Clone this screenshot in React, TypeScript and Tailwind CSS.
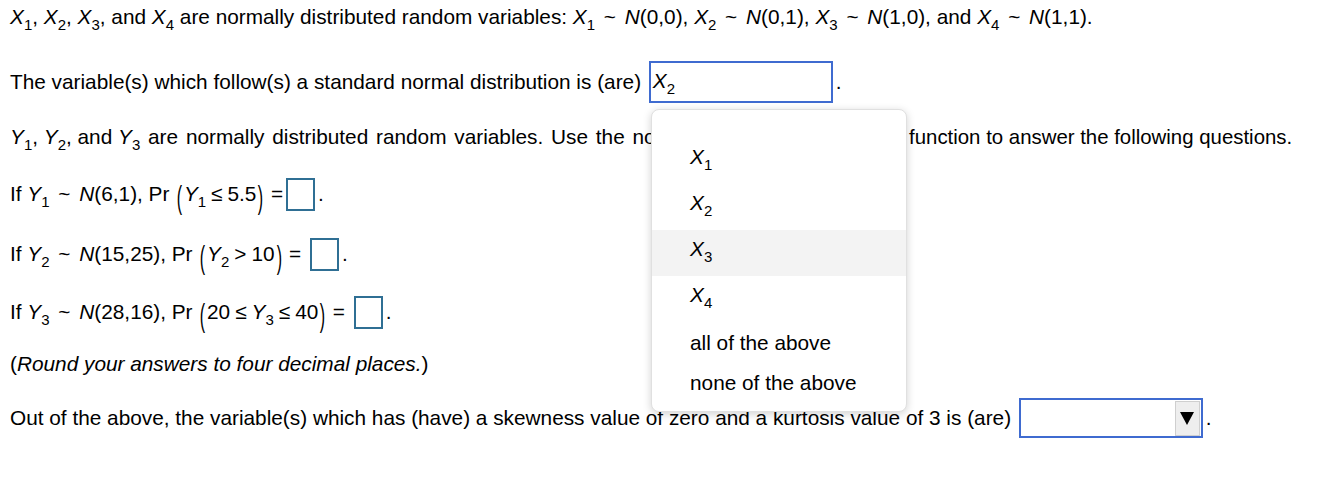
import type { ReactNode } from "react";

const font = "font-['Liberation_Sans',Arial,sans-serif]";

const V = ({ n, s }: { n: string; s: string }) => (
  <span className="whitespace-nowrap">
    <i>{n}</i>
    <span className="relative top-[6px] text-[15px] not-italic">{s}</span>
  </span>
);

const Tilde = () => <span className="mx-[3px]"> ~ </span>;

const Op = ({ c }: { c: string }) => <span className="mx-[5px]">{c}</span>;

const Paren = ({ c }: { c: string }) => (
  <span className="inline-block translate-y-[3px] scale-x-[0.8] scale-y-[1.6] px-[1px] text-[20px] leading-none">{c}</span>
);

const AnswerBox = () => <span className="mx-[3px] inline-block h-[33px] w-[29px] border-2 border-[#2f6f94] align-middle" />;

const Row = ({ className, children }: { className: string; children: ReactNode }) => (
  <div className={`flex items-center whitespace-pre ${className}`}>{children}</div>
);

const options = ["X1", "X2", "X3", "X4", "all", "none"];

export default function App() {
  return (
    <div className={`relative h-[478px] w-[1342px] overflow-hidden bg-white pl-[10px] text-[20.8px] text-black ${font}`}>
      <Row className="h-[34px]">
        <V n="X" s="1" />, <V n="X" s="2" />, <V n="X" s="3" />, and <V n="X" s="4" /> are normally distributed random variables:{" "}
        <V n="X" s="1" />
        <Tilde />
        <i>N</i>(0,0), <V n="X" s="2" />
        <Tilde />
        <i>N</i>(0,1), <V n="X" s="3" />
        <Tilde />
        <i>N</i>(1,0), and <V n="X" s="4" />
        <Tilde />
        <i>N</i>(1,1).
      </Row>

      <Row className="mt-[26px] h-[44px]">
        The variable(s) which follow(s) a standard normal distribution is (are){" "}
        <span className="ml-[2px] flex h-[42px] w-[184px] items-start border-2 border-[#3f6bd0] pl-[2px] pt-[2px]">
          <V n="X" s="2" />
        </span>
        <span className="ml-[3px]">.</span>
      </Row>

      <Row className="mt-[15px] h-[36px]">
        <V n="Y" s="1" />, <V n="Y" s="2" />, and <V n="Y" s="3" />
        <span className="[word-spacing:2px]"> are normally distributed random variables. Use the no</span>
        <span className="tracking-[-0.15px]">rmal cumulative distribution </span>
        <span className="text-[20.4px]">function to answer the following questions.</span>
      </Row>

      <Row className="mt-[21px] h-[36px]">
        If <V n="Y" s="1" />
        <Tilde />
        <i>N</i>(6,1), Pr <Paren c="(" />
        <V n="Y" s="1" />
        <Op c="≤" />
        5.5
        <Paren c=")" /> =<AnswerBox />.
      </Row>

      <Row className="mt-[24px] h-[36px]">
        If <V n="Y" s="2" />
        <Tilde />
        <i>N</i>(15,25), Pr <Paren c="(" />
        <V n="Y" s="2" />
        <Op c=">" />
        10
        <Paren c=")" /> = <AnswerBox />.
      </Row>

      <Row className="mt-[22px] h-[36px]">
        If <V n="Y" s="3" />
        <Tilde />
        <i>N</i>(28,16), Pr <Paren c="(" />
        20
        <Op c="≤" />
        <V n="Y" s="3" />
        <Op c="≤" />
        40
        <Paren c=")" /> = <AnswerBox />.
      </Row>

      <Row className="mt-[16px] h-[36px]">
        (<i>Round your answers to four decimal places.</i>)
      </Row>

      <Row className="mt-[16px] h-[40px]">
        Out of the above, the variable(s) which has (have) a skewness value of zero and a kurtosis value of 3 is (are){" "}
        <span className="ml-[2px] flex h-[40px] w-[184px] items-center justify-end border-2 border-[#3f6bd0] pr-[1px]">
          <span className="flex h-[35px] w-[25px] items-center justify-center border border-[#cfcfcf] bg-[#eeeeee]">
            <svg width="14" height="13" viewBox="0 0 14 13">
              <polygon points="0,0 14,0 7,13" fill="#000" />
            </svg>
          </span>
        </span>
        <span className="ml-[3px]">.</span>
      </Row>

      <div className="absolute left-[651px] top-[109px] w-[256px] rounded-[8px] border border-[#e0e0e0] bg-white pb-[9px] pt-[28px] shadow-[0_2px_8px_rgba(0,0,0,0.18)]">
        {options.map((o) => (
          <div
            key={o}
            className={`flex items-center pl-[38px] ${o.length === 2 ? "h-[46px] pb-[8px]" : o === "all" ? "h-[42px]" : "h-[38px]"} ${o === "X3" ? "bg-[#f3f3f3]" : ""}`}
          >
            {o.length === 2 ? <V n="X" s={o[1]} /> : o === "all" ? "all of the above" : "none of the above"}
          </div>
        ))}
      </div>
    </div>
  );
}
